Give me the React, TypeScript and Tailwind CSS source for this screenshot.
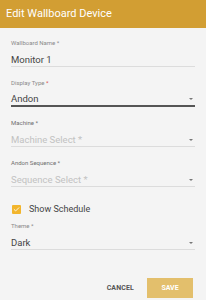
import { Check } from 'lucide-react';

interface FieldProps {
  label: string;
  value: string;
  placeholder?: boolean;
  select?: boolean;
  focused?: boolean;
  labelClass?: string;
}

function Arrow() {
  return <span className="mr-[2px] h-0 w-0 border-x-[2.5px] border-t-[2.5px] border-x-transparent border-t-[#777]" />;
}

function Field({ label, value, placeholder, select, focused, labelClass }: FieldProps) {
  return (
    <div className="mb-[12px]">
      <div className={`h-[8px] text-[6px] leading-[8px] ${labelClass ?? 'text-[#8a8a8a]'}`}>
        {label}
        <span className={focused ? 'text-[#d9534f]' : ''}> *</span>
      </div>
      <div
        className={`mt-[6px] flex h-[14px] items-center justify-between ${
          focused ? 'border-b-2 border-[#555]' : 'border-b border-[#dcdcdc]'
        }`}
      >
        <span className={`text-[9.5px] leading-[12px] ${placeholder ? 'text-[#c2c2c2]' : 'text-[#444]'}`}>
          {value}
        </span>
        {select && <Arrow />}
      </div>
    </div>
  );
}

export default function App() {
  return (
    <div className="h-[300px] w-[206px] overflow-hidden bg-[#f4f4f4] font-['Roboto',sans-serif]">
      <div className="flex h-[28px] items-center bg-[#d29e33] px-[6px] text-[11px] text-white">
        Edit Wallboard Device
      </div>
      <div className="px-[11px] pt-[11px]">
        <Field label="Wallboard Name" value="Monitor 1" />
        <Field label="Display Type" value="Andon" select focused />
        <Field label="Machine" value="Machine Select *" placeholder select labelClass="text-[#6f6f6f]" />
        <Field label="Andon Sequence" value="Sequence Select *" placeholder select labelClass="text-[#6f6f6f]" />
        <div className="mt-[18px] flex h-[9px] items-center">
          <span className="ml-[1px] flex h-[9px] w-[9px] items-center justify-center rounded-[1px] bg-[#f2b52c]">
            <Check className="h-[7px] w-[7px] text-white" strokeWidth={3} />
          </span>
          <span className="ml-[8px] text-[9px] leading-[9px] text-[#444]">Show Schedule</span>
        </div>
        <div className="mt-[8px]">
          <Field label="Theme" value="Dark" select />
        </div>
        <div className="mt-[28px] flex items-center justify-end gap-[13px] pr-[2px]">
          <button type="button" className="text-[7px] font-bold tracking-[0.02em] text-[#555]">
            CANCEL
          </button>
          <button
            type="button"
            className="flex h-[20px] w-[46px] items-center justify-center bg-[#e3bf6c] text-[7px] font-bold text-white"
          >
            SAVE
          </button>
        </div>
      </div>
    </div>
  );
}
